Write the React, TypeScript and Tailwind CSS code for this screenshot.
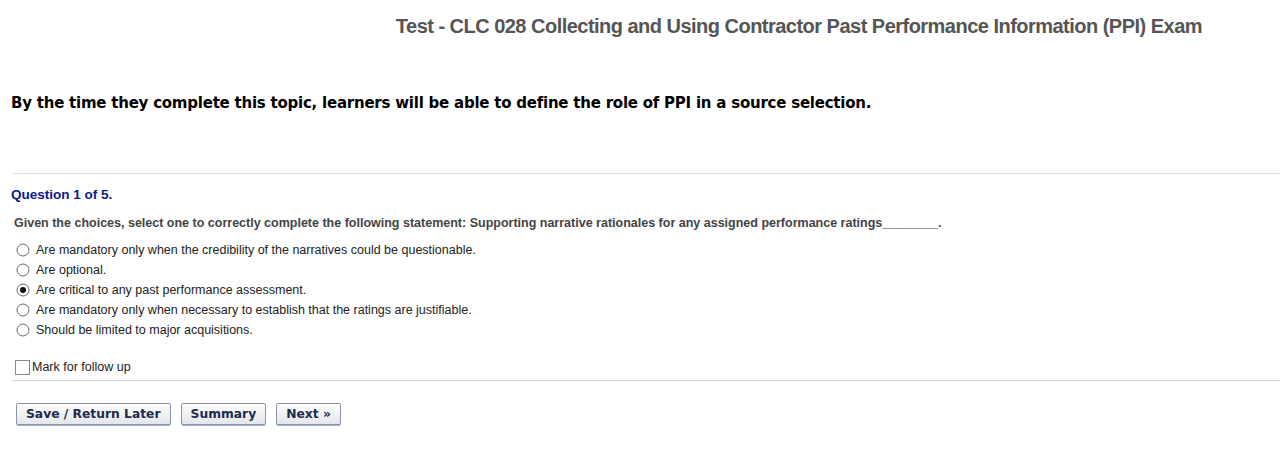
import React from "react";

const options = [
  "Are mandatory only when the credibility of the narratives could be questionable.",
  "Are optional.",
  "Are critical to any past performance assessment.",
  "Are mandatory only when necessary to establish that the ratings are justifiable.",
  "Should be limited to major acquisitions.",
];

function Radio({ checked }: { checked: boolean }) {
  return (
    <svg width="14" height="14" viewBox="0 0 14 14" className="shrink-0">
      <circle cx="7" cy="7" r="6" fill="#fff" stroke="#6a6a6a" strokeWidth="1" />
      {checked && <circle cx="7" cy="7" r="3" fill="#111" />}
    </svg>
  );
}

function Btn({ children }: { children: React.ReactNode }) {
  return (
    <button className="h-[22px] px-[9px] border border-[#8a93a6] rounded-[2px] bg-gradient-to-b from-[#fdfdfd] to-[#e4e6ea] shadow-[0_1px_0_#9fb0cf] text-[12.3px] font-bold text-[#1d2b4d] leading-none [font-family:'DejaVu_Sans',Verdana,sans-serif]">
      {children}
    </button>
  );
}

export default function App() {
  return (
    <div className="w-[1280px] h-[453px] bg-white overflow-hidden [font-family:'Liberation_Sans',Arial,sans-serif]">
      <div className="flex justify-end pr-[78px] pt-[14px]">
        <h1 className="text-[20px] font-bold text-[#555] tracking-[-0.52px] leading-[24px] whitespace-nowrap">
          Test - CLC 028 Collecting and Using Contractor Past Performance Information (PPI) Exam
        </h1>
      </div>
      <p className="mt-[55px] ml-[11px] text-[15px] font-bold text-black leading-[20px] tracking-[-0.23px] whitespace-nowrap [font-family:'DejaVu_Sans',Verdana,sans-serif]">
        By the time they complete this topic, learners will be able to define the role of PPI in a source selection.
      </p>
      <div className="mt-[60px] ml-[12px] border-t border-[#e2e2e2]" />
      <div className="mt-[13px] ml-[11px] text-[13.5px] font-bold text-[#0a1a8c] leading-[16px]">Question 1 of 5.</div>
      <div className="mt-[12px] ml-[14px] text-[12.5px] font-bold text-[#444] leading-[16px] whitespace-nowrap">
        Given the choices, select one to correctly complete the following statement: Supporting narrative rationales for any assigned performance ratings________.
      </div>
      <div className="mt-[9px] ml-[16px] flex flex-col">
        {options.map((o, i) => (
          <label key={i} className="flex items-center gap-[6px] h-[20px] text-[12.5px] text-[#222]">
            <Radio checked={i === 2} />
            <span>{o}</span>
          </label>
        ))}
      </div>
      <label className="mt-[19px] ml-[15px] flex items-center gap-[2px] text-[12.5px] text-[#222] h-[16px]">
        <span className="w-[15px] h-[15px] border border-[#888] bg-white shrink-0" />
        <span>Mark for follow up</span>
      </label>
      <div className="mt-[5px] ml-[12px] border-t border-[#d4d4d4]" />
      <div className="mt-[22px] ml-[16px] flex gap-[10px]">
        <Btn>Save / Return Later</Btn>
        <Btn>Summary</Btn>
        <Btn>Next »</Btn>
      </div>
    </div>
  );
}
